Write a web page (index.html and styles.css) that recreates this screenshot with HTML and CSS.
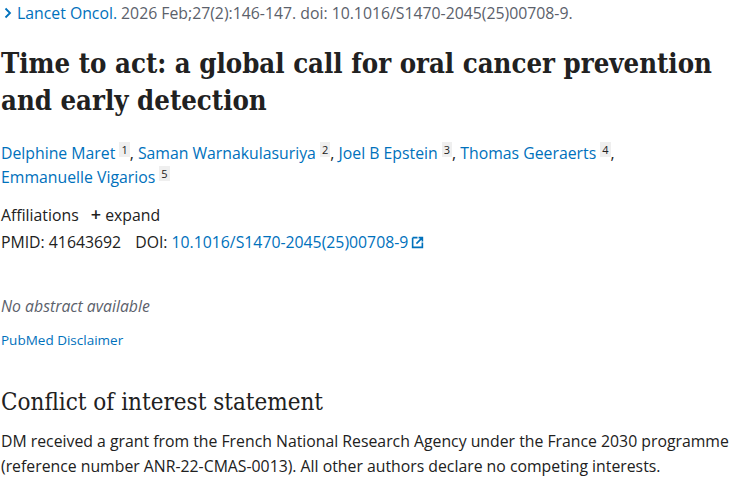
FILE: index.html
```html
<!DOCTYPE html>
<html lang="en">
<head>
<meta charset="utf-8">
<link rel="stylesheet" href="styles.css">
</head>
<body>
<main class="article">
  <div class="citation">
    <span class="chev">
      <svg width="10" height="12" viewBox="0 0 10 12"><path d="M2.5 1.5 L7 6 L2.5 10.5" fill="none" stroke="#0071bc" stroke-width="1.8"/></svg>
    </span><a class="link" href="#">Lancet Oncol.</a> 2026 Feb;27(2):146-147. doi: 10.1016/S1470-2045(25)00708-9.
  </div>
  <h1 class="title">Time to act: a global call for oral cancer prevention and early detection</h1>
  <div class="authors">
    <a class="link" href="#">Delphine Maret</a> <sup class="aff">1</sup>, <a class="link" href="#">Saman Warnakulasuriya</a> <sup class="aff">2</sup>, <a class="link" href="#">Joel B Epstein</a> <sup class="aff">3</sup>, <a class="link" href="#">Thomas Geeraerts</a> <sup class="aff">4</sup>,<br>
    <a class="link" href="#">Emmanuelle Vigarios</a> <sup class="aff">5</sup>
  </div>
  <div class="affil">Affiliations <span class="expand"><span class="plus">+</span> expand</span></div>
  <div class="ids">PMID: 41643692 <span class="doi-label">DOI:</span> <a class="link" href="#">10.1016/S1470-2045(25)00708-9</a><svg class="ext" width="13" height="13" viewBox="0 0 12 12"><path d="M1.5 1.5 H6 M1.5 1.5 V10.5 H10.5 V6 M5 7 L10.5 1.5 M7 1.5 H10.5 V5" fill="none" stroke="#0071bc" stroke-width="1.5"/></svg></div>
  <p class="noabs">No abstract available</p>
  <a class="disclaimer" href="#">PubMed Disclaimer</a>
  <h2 class="coi-title">Conflict of interest statement</h2>
  <p class="coi">DM received a grant from the French National Research Agency under the France 2030 programme (reference number ANR-22-CMAS-0013). All other authors declare no competing interests.</p>
</main>
</body>
</html>
```
FILE: styles.css
```css
html, body { margin: 0; padding: 0; background: #fff; }
body {
  font-family: "Open Sans", "Liberation Sans", sans-serif;
  color: #212121;
  font-size: 15.8px;
}
.article { padding: 0 0 0 1px; }
.link { color: #0071bc; text-decoration: none; }
.citation {
  color: #5b616b;
  font-size: 15.8px;
  line-height: 24px;
  margin-top: 1px;
  display: flex;
  align-items: center;
  white-space: nowrap;
}
.citation .chev { display: inline-flex; width: 14px; margin-left: 2px; }
.citation .link { margin-right: 4px; }
.title {
  font-family: "DejaVu Serif Condensed", "DejaVu Serif", serif;
  font-stretch: condensed;
  font-weight: bold;
  font-size: 27.3px;
  line-height: 37px;
  margin: 20px 0 0 0;
  color: #212121;
}
.authors {
  margin-top: 22px;
  line-height: 24px;
  color: #212121;
}
.aff {
  font-size: 11px;
  background: #efefef;
  color: #212121;
  padding: 0 2px;
  vertical-align: 5px;
  line-height: 1;
}
.affil {
  margin-top: 13px;
  line-height: 24px;
  color: #212121;
}
.expand { margin-left: 8px; color: #212121; }
.plus { font-size: 18px; font-weight: 600; }
.ids { line-height: 26px; margin-top: 2px; color: #212121; display: flex; align-items: center; white-space: pre; }
.doi-label { margin-left: 10px; margin-right: 4px; }
.ext { margin-left: 3px; }
.noabs { font-style: italic; color: #5b616b; margin: 39px 0 0 0; line-height: 24px; }
.disclaimer { display: block; font-size: 13.5px; color: #0071bc; text-decoration: none; margin-top: 12px; line-height: 20px; }
.coi-title {
  font-family: "DejaVu Serif Condensed", "DejaVu Serif", serif;
  font-stretch: condensed;
  font-weight: normal;
  font-size: 24px;
  line-height: 30px;
  margin: 37px 0 0 0;
}
.coi { margin: 12px 0 0 0; line-height: 25px; }
```
